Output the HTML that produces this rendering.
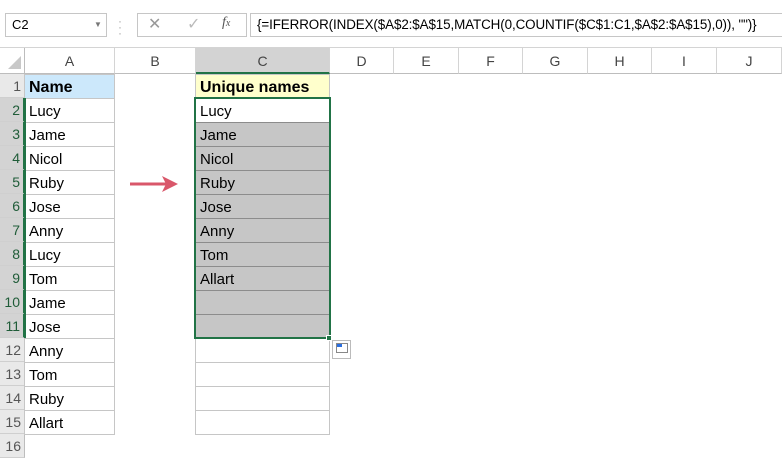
<!DOCTYPE html><html><head><style>
body{margin:0;width:782px;height:442px;overflow:hidden;background:#fff;font-family:"Liberation Sans",Arial,sans-serif;position:relative}
div{position:absolute;box-sizing:border-box}
.rh{left:0;width:25px;height:24px;background:#e9e9e9;border-bottom:1px solid #cfcfcf;border-right:1px solid #bdbdbd;color:#555;font-size:14px;text-align:right;padding-right:3px;line-height:25px}
.rh.s{background:#d3d3d3;border-right:2px solid #217346;color:#1f5c38}
.ch{top:48px;height:26px;background:#fff;border-right:1px solid #d4d4d4;border-bottom:1px solid #bdbdbd;color:#444;font-size:14px;text-align:center;line-height:26px}
.c{height:25px;border:1px solid #c6c6c6;font-size:15px;padding-left:4px;line-height:25px;color:#000}
</style></head><body>
<div style="left:0;top:0;width:782px;height:48px;background:#fff;border-bottom:1px solid #d4d4d4"></div>
<div style="left:5px;top:13px;width:102px;height:24px;border:1px solid #c6c6c6;font-size:13px;line-height:22px;padding-left:6px">C2<span style="position:absolute;left:88px;top:0;font-size:8px;color:#777">▼</span></div>
<div style="left:118px;top:18px;color:#aaa;font-size:12px;line-height:6px">·<br>·<br>·</div>
<div style="left:137px;top:13px;width:110px;height:24px;border:1px solid #c6c6c6"></div>
<div style="left:148px;top:14px;color:#999;font-size:16px">✕</div>
<div style="left:187px;top:14px;color:#bbb;font-size:16px">✓</div>
<div style="left:222px;top:15px;color:#555;font-size:14px;font-style:italic;font-family:'Liberation Serif',serif">f<span style="font-size:10px">x</span></div>
<div style="left:250px;top:13px;width:540px;height:24px;border:1px solid #c6c6c6;font-size:13.4px;line-height:22px;padding-left:6px;white-space:nowrap;letter-spacing:-0.1px">{=IFERROR(INDEX($A$2:$A$15,MATCH(0,COUNTIF($C$1:C1,$A$2:$A$15),0)), "")}</div>
<div style="left:0;top:48px;width:25px;height:26px;background:#fff;border-right:1px solid #bdbdbd;border-bottom:1px solid #bdbdbd"></div>
<div style="left:8px;top:56px;width:0;height:0;border-left:13px solid transparent;border-bottom:13px solid #c8c8c8"></div>
<div class="ch" style="left:25px;width:90px">A</div>
<div class="ch" style="left:115px;width:81px">B</div>
<div class="ch" style="left:196px;width:134px;background:#d3d3d3;border-bottom:2px solid #217346">C</div>
<div class="ch" style="left:330px;width:64px">D</div>
<div class="ch" style="left:394px;width:65px">E</div>
<div class="ch" style="left:459px;width:64px">F</div>
<div class="ch" style="left:523px;width:65px">G</div>
<div class="ch" style="left:588px;width:64px">H</div>
<div class="ch" style="left:652px;width:65px">I</div>
<div class="ch" style="left:717px;width:65px">J</div>
<div class="rh" style="top:74px">1</div><div class="rh s" style="top:98px">2</div><div class="rh s" style="top:122px">3</div><div class="rh s" style="top:146px">4</div><div class="rh s" style="top:170px">5</div><div class="rh s" style="top:194px">6</div><div class="rh s" style="top:218px">7</div><div class="rh s" style="top:242px">8</div><div class="rh s" style="top:266px">9</div><div class="rh s" style="top:290px">10</div><div class="rh s" style="top:314px">11</div><div class="rh" style="top:338px">12</div><div class="rh" style="top:362px">13</div><div class="rh" style="top:386px">14</div><div class="rh" style="top:410px">15</div><div class="rh" style="top:434px">16</div>
<div class="c" style="left:24px;top:74px;width:91px;background:#cce8fb;font-weight:bold;font-size:16px">Name</div>
<div class="c" style="left:24px;top:98px;width:91px">Lucy</div>
<div class="c" style="left:24px;top:122px;width:91px">Jame</div>
<div class="c" style="left:24px;top:146px;width:91px">Nicol</div>
<div class="c" style="left:24px;top:170px;width:91px">Ruby</div>
<div class="c" style="left:24px;top:194px;width:91px">Jose</div>
<div class="c" style="left:24px;top:218px;width:91px">Anny</div>
<div class="c" style="left:24px;top:242px;width:91px">Lucy</div>
<div class="c" style="left:24px;top:266px;width:91px">Tom</div>
<div class="c" style="left:24px;top:290px;width:91px">Jame</div>
<div class="c" style="left:24px;top:314px;width:91px">Jose</div>
<div class="c" style="left:24px;top:338px;width:91px">Anny</div>
<div class="c" style="left:24px;top:362px;width:91px">Tom</div>
<div class="c" style="left:24px;top:386px;width:91px">Ruby</div>
<div class="c" style="left:24px;top:410px;width:91px">Allart</div>
<div style="left:24px;top:98px;width:2px;height:240px;background:#217346"></div>
<div class="c" style="left:195px;top:74px;width:135px;background:#ffffcc;font-weight:bold;font-size:16px">Unique names</div>
<div class="c" style="left:195px;top:98px;width:135px">Lucy</div>
<div class="c" style="left:195px;top:122px;width:135px;background:#c6c6c6;border-color:#8c8c8c">Jame</div>
<div class="c" style="left:195px;top:146px;width:135px;background:#c6c6c6;border-color:#8c8c8c">Nicol</div>
<div class="c" style="left:195px;top:170px;width:135px;background:#c6c6c6;border-color:#8c8c8c">Ruby</div>
<div class="c" style="left:195px;top:194px;width:135px;background:#c6c6c6;border-color:#8c8c8c">Jose</div>
<div class="c" style="left:195px;top:218px;width:135px;background:#c6c6c6;border-color:#8c8c8c">Anny</div>
<div class="c" style="left:195px;top:242px;width:135px;background:#c6c6c6;border-color:#8c8c8c">Tom</div>
<div class="c" style="left:195px;top:266px;width:135px;background:#c6c6c6;border-color:#8c8c8c">Allart</div>
<div class="c" style="left:195px;top:290px;width:135px;background:#c6c6c6;border-color:#8c8c8c"></div>
<div class="c" style="left:195px;top:314px;width:135px;background:#c6c6c6;border-color:#8c8c8c"></div>
<div class="c" style="left:195px;top:338px;width:135px"></div>
<div class="c" style="left:195px;top:362px;width:135px"></div>
<div class="c" style="left:195px;top:386px;width:135px"></div>
<div class="c" style="left:195px;top:410px;width:135px"></div>
<div style="left:194px;top:97px;width:137px;height:242px;border:2px solid #217346"></div>
<div style="left:326px;top:335px;width:6px;height:6px;background:#217346;border:1px solid #fff"></div>
<div style="left:332px;top:340px;width:19px;height:19px;border:1px solid #bbb;background:#fff"></div>
<div style="left:336px;top:343px;width:6px;height:4px;background:#2b6fe0"></div>
<div style="left:336px;top:343px;width:12px;height:10px;border:1px solid #888"></div>
<svg style="position:absolute;left:128px;top:174px" width="52" height="20"><path d="M2 10 H38" stroke="#d9576a" stroke-width="3"/><path d="M34 2 L50 10 L34 18 L38 10 Z" fill="#d9576a"/></svg>
</body></html>
